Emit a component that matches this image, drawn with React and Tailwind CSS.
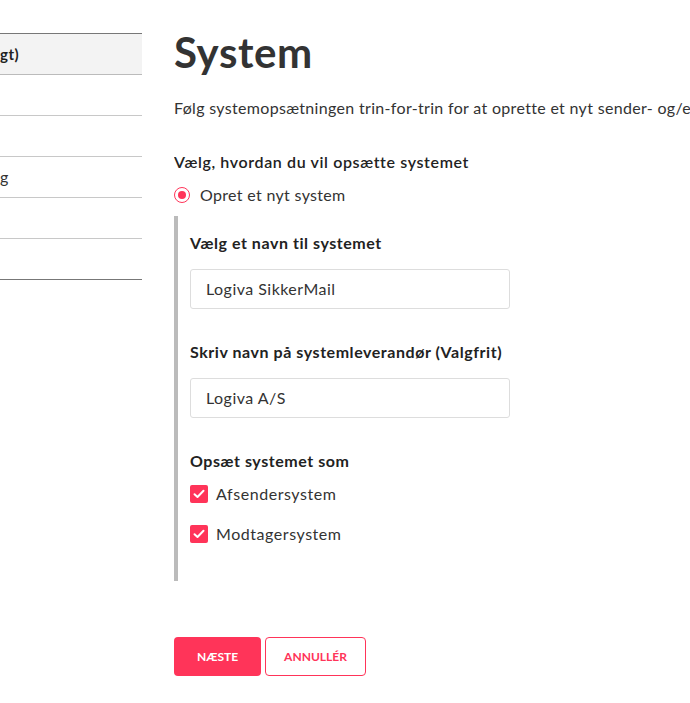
import React from "react";

function Check() {
  return (
    <span className="flex h-[18px] w-[18px] shrink-0 items-center justify-center rounded-[2px] bg-[#ff3459]">
      <svg width="12" height="10" viewBox="0 0 12 10" fill="none">
        <path d="M1.5 5.2 L4.5 8 L10.5 1.8" stroke="white" strokeWidth="2" strokeLinecap="round" strokeLinejoin="round" />
      </svg>
    </span>
  );
}

export default function App() {
  return (
    <div className="flex w-[690px] h-[703px] overflow-hidden bg-white text-[#333] font-['Lato',sans-serif]">
      {/* left table (clipped) */}
      <div className="w-[142px] shrink-0 pt-[33px]">
        <div className="border-t border-[#777] border-b border-b-[#bbb] bg-[#f3f3f3] h-[42px] flex items-center text-[15px] font-bold text-[#222] tracking-[0.5px]">gt)</div>
        <div className="h-[41px] border-b border-[#c8c8c8]"></div>
        <div className="h-[41px] border-b border-[#c8c8c8]"></div>
        <div className="h-[41px] border-b border-[#c8c8c8] flex items-center text-[16px]">g</div>
        <div className="h-[41px] border-b border-[#c8c8c8]"></div>
        <div className="h-[41px] border-b border-[#777]"></div>
      </div>

      {/* main */}
      <div className="ml-[32px] flex-1 min-w-0 overflow-hidden">
        <h1 className="mt-[27px] text-[42px] leading-[50px] font-bold text-[#333] tracking-[0.6px] whitespace-nowrap">System</h1>
        <p className="mt-[19px] text-[16px] leading-[24px] tracking-[0.32px] whitespace-nowrap text-[#333]">
          Følg systemopsætningen trin-for-trin for at oprette et nyt sender- og/eller modtagersystem.
        </p>
        <div className="mt-[30px] text-[16px] leading-[24px] font-semibold tracking-[0.62px] text-[#222]">Vælg, hvordan du vil opsætte systemet</div>
        <label className="mt-[9px] flex items-center gap-[10px] text-[16px] leading-[24px] tracking-[0.32px]">
          <span className="flex h-[16px] w-[16px] items-center justify-center rounded-full border border-[#ff3459]">
            <span className="h-[8px] w-[8px] rounded-full bg-[#ff3459]"></span>
          </span>
          Opret et nyt system
        </label>

        <div className="mt-[9px] border-l-4 border-[#bbb] pl-[12px] pt-[15px] pb-[35px] w-[340px]">
          <div className="text-[16px] leading-[24px] font-bold tracking-[0.55px] text-[#222]">Vælg et navn til systemet</div>
          <div className="mt-[14px] h-[40px] w-[320px] rounded-[3px] border border-[#ddd] flex items-center px-[15px] text-[16px] tracking-[0.47px]">Logiva SikkerMail</div>

          <div className="mt-[31px] text-[16px] leading-[24px] font-bold tracking-[0.55px] text-[#222] whitespace-nowrap">Skriv navn på systemleverandør (Valgfrit)</div>
          <div className="mt-[14px] h-[40px] w-[320px] rounded-[3px] border border-[#ddd] flex items-center px-[15px] text-[16px] tracking-[0.47px]">Logiva A/S</div>

          <div className="mt-[31px] text-[16px] leading-[24px] font-bold tracking-[0.55px] text-[#222]">Opsæt systemet som</div>
          <div className="mt-[9px] flex items-center gap-[8px] text-[16px] leading-[24px] tracking-[0.55px]">
            <Check />
            Afsendersystem
          </div>
          <div className="mt-[16px] flex items-center gap-[8px] text-[16px] leading-[24px] tracking-[0.55px]">
            <Check />
            Modtagersystem
          </div>
        </div>

        <div className="mt-[56px] flex gap-[4px]">
          <button className="h-[39px] w-[87px] rounded-[4px] bg-[#ff3459] text-white text-[12px] font-bold uppercase">Næste</button>
          <button className="h-[39px] w-[101px] rounded-[4px] border border-[#ff3459] bg-white text-[#ff3459] text-[12px] font-bold uppercase">Annullér</button>
        </div>
      </div>
    </div>
  );
}
